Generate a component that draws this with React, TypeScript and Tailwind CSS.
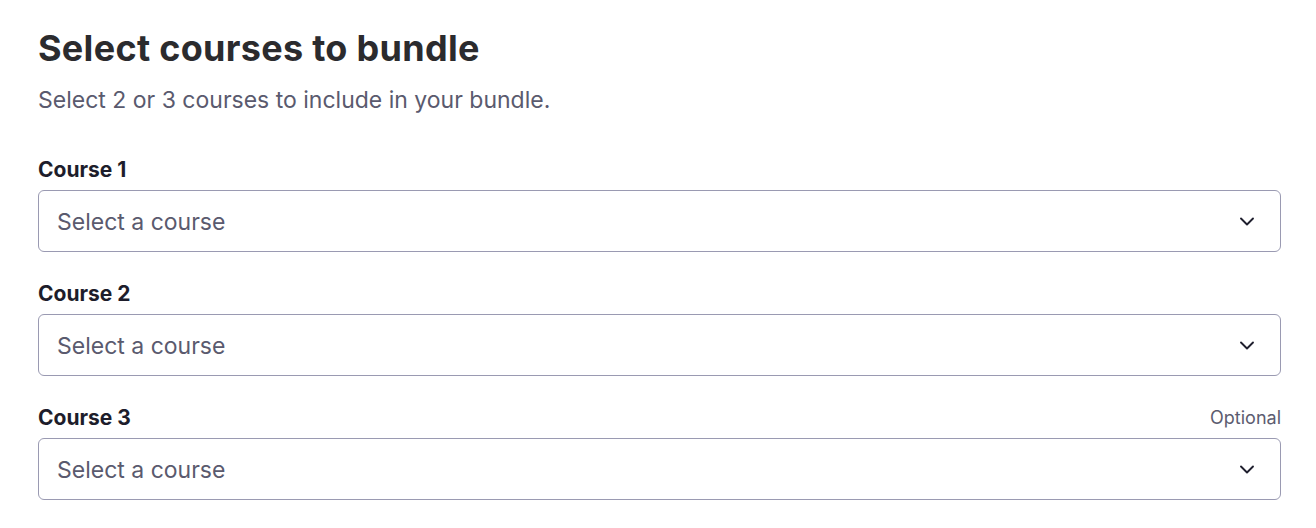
import React from "react";

function Chevron() {
  return (
    <svg width="20" height="20" viewBox="0 0 20 20" fill="none" stroke="#1f1f2e" strokeWidth="1.9" strokeLinecap="round" strokeLinejoin="round">
      <path d="M4 7.5l6 6 6-6" />
    </svg>
  );
}

function Field({ label, optional }: { label: string; optional?: boolean }) {
  return (
    <div className="flex flex-col">
      <div className="flex items-end justify-between h-[26px] mb-[7px]">
        <span className="text-[21px] font-bold text-[#1d1d2b] leading-[26px]">{label}</span>
        {optional && <span className="text-[18px] text-[#5c5c70] leading-[26px]">Optional</span>}
      </div>
      <div className="h-[62px] rounded-[6px] border border-[#9a9ab2] flex items-center justify-between pl-[18px] pr-[23px]">
        <span className="text-[23px] text-[#5a5a6e] leading-[30px] pt-[2px]">Select a course</span>
        <Chevron />
      </div>
    </div>
  );
}

export default function App() {
  return (
    <div className="bg-white w-[1316px] h-[528px] px-[38px] pt-[26px]" style={{ fontFamily: "Inter, 'Noto Sans', sans-serif" }}>
      <h1 className="text-[36px] font-bold text-[#2b2b2e] leading-[44px] tracking-[0.3px]">Select courses to bundle</h1>
      <p className="text-[23px] text-[#5a5a6e] leading-[30px] mt-[15px]">Select 2 or 3 courses to include in your bundle.</p>
      <div className="flex flex-col gap-[29px] mt-[42px] w-[1243px]">
        <Field label="Course 1" />
        <Field label="Course 2" />
        <Field label="Course 3" optional />
      </div>
    </div>
  );
}
